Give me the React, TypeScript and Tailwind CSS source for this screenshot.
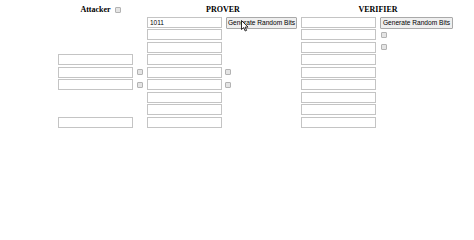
import type { ReactNode } from "react";

const box = "h-[11px] w-[75px] border border-[#c4c4c4] bg-white px-[2px] text-[6.5px] leading-[9px] text-black outline-none";
const check = "block h-[6px] w-[6px] shrink-0 rounded-[1px] border border-[#b3b3b3] bg-[#e4e4e4]";
const btn = "h-[12px] shrink-0 rounded-[1px] border border-[#a9a9a9] bg-[#efefef] text-[6.6px] leading-[10px] text-black";

function Row({ children }: { children?: ReactNode }) {
  return <div className="flex h-[11px] items-center">{children}</div>;
}

function Field({ value = "" }: { value?: string }) {
  return <input className={box} defaultValue={value} />;
}

function Heading({ children }: { children: ReactNode }) {
  return (
    <div className="flex h-[15px] items-center justify-center gap-[4px] pt-[4px] font-bold text-[8px] leading-none">
      {children}
    </div>
  );
}

export default function App() {
  return (
    <div
      className="relative h-[205px] w-[474px] bg-white"
      style={{ fontFamily: '"Liberation Sans", Arial, sans-serif' }}
    >
      <div className="flex pl-[58px]">
        {/* attacker */}
        <div className="flex w-[85px] flex-col gap-[1.5px]">
          <div style={{ fontFamily: '"Liberation Serif", serif' }}>
            <Heading>
              <span>Attacker</span>
              <span className={check} />
            </Heading>
          </div>
          <Row />
          <Row />
          <Row />
          <Row><Field /></Row>
          <Row><Field /><span className={`${check} ml-[4px]`} /></Row>
          <Row><Field /><span className={`${check} ml-[4px]`} /></Row>
          <Row />
          <Row />
          <Row><Field /></Row>
        </div>

        {/* prover */}
        <div className="ml-[4px] flex w-[152px] flex-col gap-[1.5px]">
          <div style={{ fontFamily: '"Liberation Serif", serif' }}>
            <Heading>PROVER</Heading>
          </div>
          <Row>
            <Field value="1011" />
            <button className={`${btn} ml-[4px] mt-[1px] w-[71px]`}>Generate Random Bits</button>
          </Row>
          <Row><Field /></Row>
          <Row><Field /></Row>
          <Row><Field /></Row>
          <Row><Field /><span className={`${check} ml-[3px]`} /></Row>
          <Row><Field /><span className={`${check} ml-[3px]`} /></Row>
          <Row><Field /></Row>
          <Row><Field /></Row>
          <Row><Field /></Row>
        </div>

        {/* verifier */}
        <div className="ml-[2px] flex w-[154px] flex-col gap-[1.5px]">
          <div style={{ fontFamily: '"Liberation Serif", serif' }}>
            <Heading>VERIFIER</Heading>
          </div>
          <Row>
            <Field />
            <button className={`${btn} ml-[4px] mt-[1px] w-[73px]`}>Generate Random Bits</button>
          </Row>
          <Row><Field /><span className={`${check} ml-[5px]`} /></Row>
          <Row><Field /><span className={`${check} ml-[5px]`} /></Row>
          <Row><Field /></Row>
          <Row><Field /></Row>
          <Row><Field /></Row>
          <Row><Field /></Row>
          <Row><Field /></Row>
          <Row><Field /></Row>
        </div>
      </div>

      {/* mouse pointer over the button */}
      <svg className="absolute left-[241px] top-[20px]" width="8" height="12" viewBox="0 0 8 12">
        <path d="M0.5 0.5 L0.5 9.5 L2.7 7.6 L4.2 11 L5.6 10.4 L4.1 7.1 L7 7.1 Z" fill="white" stroke="black" strokeWidth="0.8" strokeLinejoin="round" />
      </svg>
    </div>
  );
}
